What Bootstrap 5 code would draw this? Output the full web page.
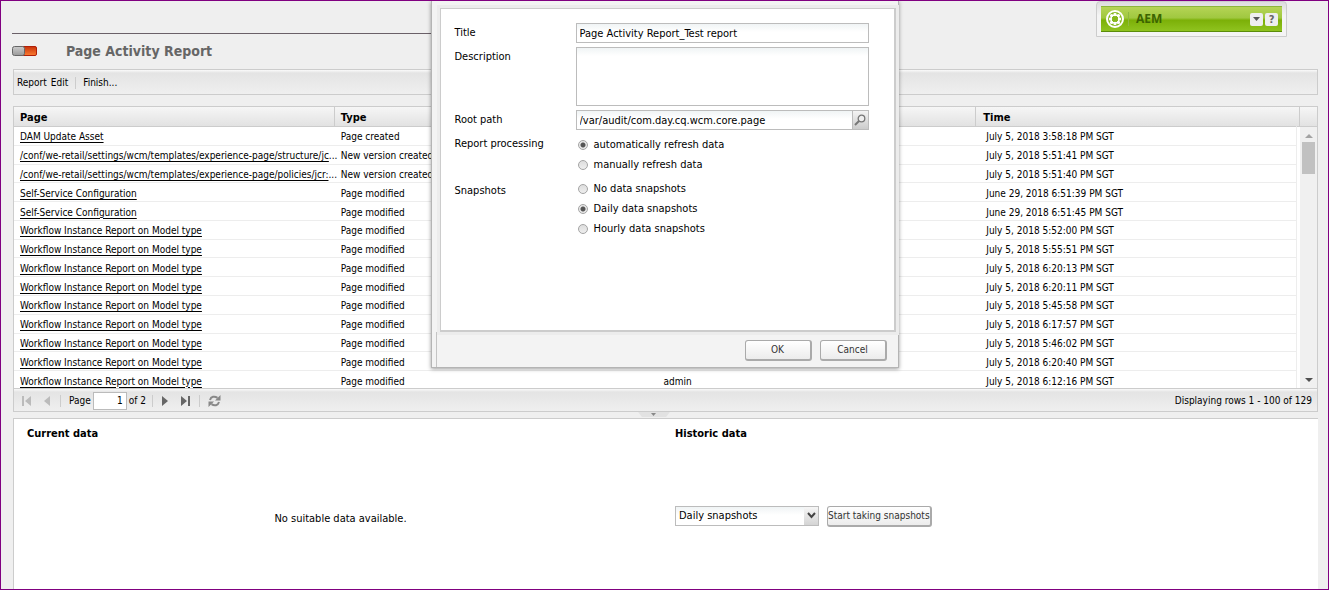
<!DOCTYPE html>
<html lang="en">
<head>
<meta charset="utf-8">
<meta name="viewport" content="width=device-width, initial-scale=1">
<title>Page Activity Report</title>
<link rel="stylesheet" href="https://cdn.jsdelivr.net/npm/bootstrap@5.3.0/dist/css/bootstrap.min.css">
<style>
  :root { --line: #cccccc; --frame: #800080; }
  body { font-family: "DejaVu Sans Condensed", "Noto Sans", sans-serif; font-size: 10px; line-height: 16px; color: #000; background: #efefef; }
  button, input, select, textarea { font-family: inherit; color: inherit; }
  .app { min-height: 100vh; border: 1px solid var(--frame); overflow: hidden; }
  .page-head { padding-left: 11px; }
  .title-rule { border-bottom: 1px solid #6a6068; height: 33px; }
  .brand-box { width: 191px; height: 36px; margin-right: 41px; padding: 4px; border: 1px solid #ccc; border-radius: 4px 4px 0 0; background: linear-gradient(#ddd, #f4f4f4 40%); }
  .brand-bar { height: 26px; padding: 0 4px 0 5px; border-bottom: 1px solid #5b8c0a; border-top: 1px solid #8db639; background: linear-gradient(#b5d455, #a0c840 45%, #7cb008 55%, #8fc31f); }
  .brand-name { font-family: "Open Sans", sans-serif; font-size: 12px; font-weight: 700; line-height: 14px; color: #3c6400; border-left: 1px solid #8fb840; padding-left: 7px; }
  .brand-btn { width: 13px; height: 13px; margin-left: 2px; padding: 0; border: 0; border-radius: 2px; background: #eee; font-size: 11px; font-weight: 700; line-height: 13px; color: #666; }
  .report-title { font-size: 14px; font-weight: 700; line-height: 20px; color: #666; margin: 0 0 0 29px; }
  .workspace { padding: 0 10px 0 12px; }
  .bar { border: 1px solid var(--line); background: linear-gradient(#fafafa 0, #e4e4e4 3px, #efefef); }
  .tool-btn { border: 0; padding: 0; background: none; font-size: 10px; line-height: 16px; }
  .menu-bar { height: 26px; margin: 8px 0 11px; padding: 2px 3px 0; }
  .sep { width: 1px; height: 12px; background: #ccc; }
  .menu-sep { margin: 0 7px; }
  .grid-box { border: 1px solid var(--line); border-bottom: 0; background: #fff; height: 282px; overflow: hidden; }
  .grid-main { min-width: 0; }
  .report-grid { width: 100%; table-layout: fixed; border-collapse: separate; border-spacing: 0; height: 283px; }
  .report-grid thead tr { height: 20px; }
  .report-grid th { font-size: 11px; padding: 3px 5px 0 6px; border-bottom: 1px solid var(--line); border-right: 1px solid var(--line); background: linear-gradient(#f6f6f6, #e2e2e2); line-height: 16px; }
  .report-grid th:last-child { padding-left: 7px; }
  .report-grid th.no-rule { border-right-color: transparent; }
  .report-grid td { padding: 2px 0 0 6px; border-bottom: 1px solid #ededed; line-height: 15px; white-space: nowrap; }
  .report-grid td:last-child { border-right: 1px solid #ededed; padding-left: 10px; }
  .report-grid a { color: #000; text-decoration: underline; text-underline-offset: 2px; }
  .scroll-side { width: 20px; flex: none; }
  .scroll-head { height: 20px; border-bottom: 1px solid var(--line); background: linear-gradient(#f6f6f6, #e2e2e2); padding-left: 2px; }
  .scroll-head span { border-left: 1px solid var(--line); }
  .scroll-track { background: #f0f0f0; margin-left: 3px; padding: 7px 0 6px; }
  .scroll-thumb { width: 13px; height: 32px; background: #c1c1c1; }
  .pager { padding: 1px 5px 0 8px; height: 24px; }
  .page-box { width: 34px; height: 18px; margin: 0 2px; padding: 0 3px; border: 1px solid #bbb; text-align: right; font-size: 10px; }
  .pager-sep { margin: 0 8px 0 6px; }
  .splitter { height: 6px; }
  .data-box { border: 1px solid var(--line); border-width: 1px 0 0 1px; background: #fff; }
  .panel-title { font-size: 11px; line-height: 16px; font-weight: 700; margin: 0; }
  .panel-half { padding: 7px 0 0 9px; }
  .empty-note { padding-top: 69px; }
  .fld { font-size: 11px; line-height: 16px; border: 1px solid #bcbcbc; border-radius: 0; background: linear-gradient(#f0f4f5, #fff 8px); padding: 0 3px; outline: 0; display: block; }
  .fld-area { height: 59px; resize: none; }
  .fld-line { height: 20px; }
  .trigger { width: 16px; height: 20px; padding: 0; border: 1px solid #bcbcbc; border-left: 0; background: linear-gradient(#f4f4f4, #ccc); }
  .pick { appearance: none; width: 144px; height: 20px; padding: 0 20px 0 3px; background: no-repeat right / 14px 100% linear-gradient(#f6f6f6, #d4d4d4), linear-gradient(#f0f4f5, #fff 8px); }
  .pick-arrow { right: 3px; top: 6px; pointer-events: none; }
  .push { height: 21px; padding: 0; border: 1px solid #aaa; border-right: 2px solid #aaa; border-bottom: 2px solid #aaa; border-radius: 3px; background: linear-gradient(#fff, #ececec); font-size: 10px; color: #333; }
  .push-std { width: 67px; }
  .dialog { left: 0; right: 0; top: 0; width: 468px; margin: 0 auto; border: 1px solid #b4b4b4; border-top: 0; background: #f3f3f3; box-shadow: 0 1px 4px rgba(0,0,0,.4); padding: 0 2px 0 4px; }
  .dialog-form { border: 1px solid var(--line); border-width: 1px 2px 2px 1px; outline: 3px solid #ececec; background: #fff; margin: 7px 0 0 4px; height: 324px; padding: 14px 25px 0 14px; font-size: 11px; }
  .dialog-foot { border-left: 1px solid #c4c4c4; padding: 8px 9px 6px; }
  .lbl { width: 121px; flex: none; line-height: 20px; }
  .opts { gap: 4px; }
  .opts-proc { padding-top: 3px; }
  .opt { gap: 6px; height: 16px; padding-left: 2px; }
  .opt input { appearance: none; width: 10px; height: 10px; margin: 0; border: 1px solid #a4a4a4; border-radius: 50%; background: linear-gradient(#ddd, #eee); }
  .opt input:checked { background: radial-gradient(circle, #555 0 2px, #e8e8e8 3px); }
</style>
</head>
<body>
<div class="app d-flex flex-column position-relative">
  <header class="page-head d-flex justify-content-between align-items-start">
    <div class="title-rule w-50"></div>
    <div class="brand-box">
      <div class="brand-bar d-flex align-items-center">
        <svg width="18" height="18" viewBox="0 0 18 18" fill="none" aria-hidden="true"><circle cx="9" cy="9" r="8" fill="#86b81c" stroke="#fff" stroke-width="2"/><g fill="#fff"><circle cx="9" cy="4.500" r="1.700"/><circle cx="12.400" cy="5.600" r="1.700"/><circle cx="13.500" cy="9" r="1.700"/><circle cx="12.400" cy="12.400" r="1.700"/><circle cx="9" cy="13.500" r="1.700"/><circle cx="5.600" cy="12.400" r="1.700"/><circle cx="4.500" cy="9" r="1.700"/><circle cx="5.600" cy="5.600" r="1.700"/></g><circle cx="9" cy="9" r="4" stroke="#fff" stroke-width="1"/></svg>
        <span class="brand-name ms-1">AEM</span>
        <button class="brand-btn ms-auto d-flex align-items-center justify-content-center" aria-label="Menu"><svg width="7" height="4" viewBox="0 0 7 4"><path d="M0 0h7L3.500 4z" fill="#555"/></svg></button>
        <button class="brand-btn">?</button>
      </div>
    </div>
  </header>

  <div class="page-head d-flex align-items-center pt-1">
    <svg width="25" height="10" viewBox="0 0 25 10" aria-hidden="true"><defs><linearGradient id="knob" x2="0" y2="1"><stop stop-color="#ccc"/><stop offset="1" stop-color="#999"/></linearGradient><linearGradient id="track" x2="0" y2="1"><stop stop-color="#c8320a"/><stop offset="1" stop-color="#fa7d32"/></linearGradient></defs><rect x="8.500" y=".5" width="16" height="9" rx="1.500" fill="url(#track)" stroke="#b02008"/><rect x=".5" y=".5" width="12" height="9" rx="2" fill="url(#knob)" stroke="#666"/></svg>
    <h1 class="report-title">Page Activity Report</h1>
  </div>

  <main class="workspace d-flex flex-column flex-grow-1">
    <nav class="bar menu-bar d-flex align-items-center">
      <button class="tool-btn">Report</button>
      <button class="tool-btn ms-1">Edit</button>
      <span class="sep menu-sep"></span>
      <button class="tool-btn">Finish...</button>
    </nav>

    <div class="grid-box d-flex">
      <div class="grid-main flex-grow-1">
      <table class="report-grid">
        <thead><tr><th>Page</th><th class="no-rule">Type</th><th></th><th class="no-rule">Time</th></tr></thead>
        <tbody>
          <tr><td><a href="#">DAM Update Asset</a></td><td>Page created</td><td></td><td>July 5, 2018 3:58:18 PM SGT</td></tr>
          <tr><td><a href="#">/conf/we-retail/settings/wcm/templates/experience-page/structure/jc</a>...</td><td>New version created</td><td></td><td>July 5, 2018 5:51:41 PM SGT</td></tr>
          <tr><td><a href="#">/conf/we-retail/settings/wcm/templates/experience-page/policies/jcr:</a>...</td><td>New version created</td><td></td><td>July 5, 2018 5:51:40 PM SGT</td></tr>
          <tr><td><a href="#">Self-Service Configuration</a></td><td>Page modified</td><td></td><td>June 29, 2018 6:51:39 PM SGT</td></tr>
          <tr><td><a href="#">Self-Service Configuration</a></td><td>Page modified</td><td></td><td>June 29, 2018 6:51:45 PM SGT</td></tr>
          <tr><td><a href="#">Workflow Instance Report on Model type</a></td><td>Page modified</td><td></td><td>July 5, 2018 5:52:00 PM SGT</td></tr>
          <tr><td><a href="#">Workflow Instance Report on Model type</a></td><td>Page modified</td><td></td><td>July 5, 2018 5:55:51 PM SGT</td></tr>
          <tr><td><a href="#">Workflow Instance Report on Model type</a></td><td>Page modified</td><td></td><td>July 5, 2018 6:20:13 PM SGT</td></tr>
          <tr><td><a href="#">Workflow Instance Report on Model type</a></td><td>Page modified</td><td></td><td>July 5, 2018 6:20:11 PM SGT</td></tr>
          <tr><td><a href="#">Workflow Instance Report on Model type</a></td><td>Page modified</td><td></td><td>July 5, 2018 5:45:58 PM SGT</td></tr>
          <tr><td><a href="#">Workflow Instance Report on Model type</a></td><td>Page modified</td><td></td><td>July 5, 2018 6:17:57 PM SGT</td></tr>
          <tr><td><a href="#">Workflow Instance Report on Model type</a></td><td>Page modified</td><td></td><td>July 5, 2018 5:46:02 PM SGT</td></tr>
          <tr><td><a href="#">Workflow Instance Report on Model type</a></td><td>Page modified</td><td></td><td>July 5, 2018 6:20:40 PM SGT</td></tr>
          <tr><td><a href="#">Workflow Instance Report on Model type</a></td><td>Page modified</td><td class="ps-2">admin</td><td>July 5, 2018 6:12:16 PM SGT</td></tr>
        </tbody>
      </table>
      </div>
      <div class="scroll-side d-flex flex-column" aria-hidden="true">
        <div class="scroll-head d-flex"><span class="h-100"></span></div>
        <div class="scroll-track flex-grow-1 d-flex flex-column align-items-center">
          <svg width="8" height="4" viewBox="0 0 8 4"><path d="M0 4h8L4 0z" fill="#a3a3a3"/></svg>
          <div class="scroll-thumb mt-1"></div>
          <svg class="mt-auto" width="8" height="4" viewBox="0 0 8 4"><path d="M0 0h8L4 4z" fill="#505050"/></svg>
        </div>
      </div>
    </div>

    <div class="bar pager d-flex align-items-center">
      <button class="tool-btn d-flex" aria-label="First page"><svg width="10" height="10" viewBox="0 0 10 10" fill="#bbb"><path d="M0 0h2v10H0zM9 0v10L3 5z"/></svg></button>
      <button class="tool-btn d-flex ms-2 ps-1" aria-label="Previous page"><svg width="8" height="10" viewBox="0 0 8 10" fill="#bbb"><path d="M6 0v10L0 5z"/></svg></button>
      <span class="sep pager-sep ms-2 me-1"></span>
      <label class="ps-1" for="pg">Page</label>
      <input id="pg" class="page-box" value="1">
      <span>of 2</span>
      <span class="sep pager-sep"></span>
      <button class="tool-btn d-flex" aria-label="Next page"><svg width="8" height="10" viewBox="0 0 8 10" fill="#666"><path d="M1 0v10l6-5z"/></svg></button>
      <button class="tool-btn d-flex ms-2 ps-1" aria-label="Last page"><svg width="10" height="10" viewBox="0 0 10 10" fill="#666"><path d="M7 0h2v10H7zM0 0v10l6-5z"/></svg></button>
      <span class="sep mx-2"></span>
      <button class="tool-btn d-flex" aria-label="Refresh"><svg width="13" height="12" viewBox="0 0 13 12" fill="none" stroke="#888" stroke-width="2"><path d="M2 5C3 1.500 6.500 .8 9.500 2.800M11 7C10 10.500 6.500 11.200 3.500 9.200"/><path d="M12.500 0v5.500H7zM.5 12V6.500H6z" fill="#888" stroke="none"/></svg></button>
      <span class="ms-auto">Displaying rows 1 - 100 of 129</span>
    </div>
    <div class="splitter d-flex justify-content-center align-items-start pe-4"><svg width="32" height="6" viewBox="0 0 32 6" aria-hidden="true"><path d="M0 0h32l-4 5H4z" fill="#e2e2e2"/><path d="M13 1h5l-2.500 3z" fill="#888"/></svg></div>

    <section class="data-box flex-grow-1 d-flex">
      <div class="w-50 panel-half">
        <h2 class="panel-title ps-1">Current data</h2>
        <p class="empty-note panel-title text-center fw-normal pe-2">No suitable data available.</p>
      </div>
      <div class="w-50 panel-half">
        <h2 class="panel-title">Historic data</h2>
        <div class="d-flex gap-2 pt-5 mt-3">
          <div class="position-relative">
            <select class="fld pick" aria-label="Snapshot interval"><option>Daily snapshots</option><option>Hourly snapshots</option></select>
            <svg class="pick-arrow position-absolute" width="9" height="7" viewBox="0 0 9 7" fill="none" stroke="#444" stroke-width="2"><path d="M1 1l3.500 4L8 1"/></svg>
          </div>
          <button class="push">Start taking snapshots</button>
        </div>
      </div>
    </section>
  </main>

  <div class="dialog position-absolute" role="dialog" aria-label="Report settings">
    <form class="dialog-form">
      <div class="d-flex mb-1"><label class="lbl" for="ttl">Title</label><input id="ttl" class="fld fld-line flex-grow-1" value="Page Activity Report_Test report"></div>
      <div class="d-flex mb-1"><label class="lbl" for="dsc">Description</label><textarea id="dsc" class="fld fld-area flex-grow-1"></textarea></div>
      <div class="d-flex"><label class="lbl" for="root">Root path</label><input id="root" class="fld fld-line flex-grow-1" value="/var/audit/com.day.cq.wcm.core.page">
        <button type="button" class="trigger d-flex align-items-center justify-content-center" aria-label="Browse"><svg width="12" height="12" viewBox="0 0 12 12" fill="none" stroke="#777"><circle cx="7.500" cy="4.500" r="3.300" fill="#eee" stroke-width="1.300"/><path d="M5 7l-4 4" stroke-width="2"/></svg></button></div>
      <div class="d-flex pt-1" role="radiogroup" aria-label="Report processing">
        <span class="lbl">Report processing</span>
        <div class="opts opts-proc d-flex flex-column">
          <label class="opt d-flex align-items-center"><input type="radio" name="proc" checked>automatically refresh data</label>
          <label class="opt d-flex align-items-center"><input type="radio" name="proc">manually refresh data</label>
        </div>
      </div>
      <div class="d-flex pt-2" role="radiogroup" aria-label="Snapshots">
        <span class="lbl lh-1 pt-1">Snapshots</span>
        <div class="opts d-flex flex-column">
          <label class="opt d-flex align-items-center"><input type="radio" name="snap">No data snapshots</label>
          <label class="opt d-flex align-items-center"><input type="radio" name="snap" checked>Daily data snapshots</label>
          <label class="opt d-flex align-items-center"><input type="radio" name="snap">Hourly data snapshots</label>
        </div>
      </div>
    </form>
    <div class="dialog-foot d-flex justify-content-end">
      <button class="push push-std me-1">OK</button>
      <button class="push push-std ms-1">Cancel</button>
    </div>
  </div>
</div>
<script src="https://cdn.jsdelivr.net/npm/bootstrap@5.3.0/dist/js/bootstrap.bundle.min.js"></script>
</body>
</html>
